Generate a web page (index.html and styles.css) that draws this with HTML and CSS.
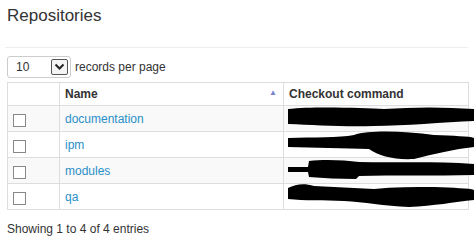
FILE: index.html
```html
<!DOCTYPE html>
<html lang="en">
<head>
    <meta charset="UTF-8">
    <title>Repositories</title>
    <link rel="stylesheet" href="styles.css">
</head>
<body>
    <div class="page">
        <h1>Repositories</h1>
        <hr class="divider">

        <div class="length-control">
            <div class="fake-select">
                <span class="value">10</span>
                <span class="arrow">
                    <svg width="11" height="8" viewBox="0 0 11 8"><path d="M1.5 1.5 L5.5 5.5 L9.5 1.5" fill="none" stroke="#222" stroke-width="2"/></svg>
                </span>
            </div>
            <span>records per page</span>
        </div>

        <table class="repo-table">
            <thead>
                <tr>
                    <th class="col-check"></th>
                    <th class="col-name">Name <span class="sort">&#9650;</span></th>
                    <th class="col-cmd">Checkout command</th>
                </tr>
            </thead>
            <tbody>
                <tr>
                    <td class="col-check"><span class="box"></span></td>
                    <td><a href="#">documentation</a></td>
                    <td class="redacted">
                        <svg width="190" height="25" viewBox="0 0 190 25"><path d="M4 3 C30 0 80 2 100 3 C130 1 160 1 190 3 L190 15 C160 16 120 20 90 20 C60 21 30 19 4 18 Z" fill="#000"/></svg>
                    </td>
                </tr>
                <tr>
                    <td class="col-check"><span class="box"></span></td>
                    <td><a href="#">ipm</a></td>
                    <td class="redacted">
                        <svg width="190" height="25" viewBox="0 0 190 25"><path d="M4 6 C30 5 55 6 70 3 C85 -2 120 -1 150 3 C170 4 185 4 190 6 L190 15 C170 17 150 22 130 27 C110 28 95 24 85 17 C60 16 30 16 4 15 Z" fill="#000"/></svg>
                    </td>
                </tr>
                <tr>
                    <td class="col-check"><span class="box"></span></td>
                    <td><a href="#">modules</a></td>
                    <td class="redacted">
                        <svg width="190" height="25" viewBox="0 0 190 25"><path d="M4 9 L24 9 L25 3 C40 1 60 2 75 4 C110 5 150 3 190 6 L190 17 C150 18 110 17 75 18 L72 21 C55 21 40 20 25 19 L24 14 L4 14 Z" fill="#000"/></svg>
                    </td>
                </tr>
                <tr>
                    <td class="col-check"><span class="box"></span></td>
                    <td><a href="#">qa</a></td>
                    <td class="redacted">
                        <svg width="190" height="25" viewBox="0 0 190 25"><path d="M4 4 C12 0 20 -1 30 2 C50 3 70 4 90 5 C110 3 130 3 150 3 C170 4 185 4 190 6 L190 16 C170 18 150 22 125 23 C100 22 80 18 60 17 C40 16 20 17 4 15 Z" fill="#000"/></svg>
                    </td>
                </tr>
            </tbody>
        </table>

        <div class="info">Showing 1 to 4 of 4 entries</div>
    </div>
</body>
</html>
```

FILE: styles.css
```css
body {
    margin: 0;
    font-family: 'Liberation Sans', Arial, sans-serif;
    font-size: 12px;
    color: #333;
    background-color: #fff;
}

.page {
    padding: 5px 6px 0 7px;
}

h1 {
    margin: 0;
    font-size: 17px;
    font-weight: normal;
    line-height: 22px;
    color: #333;
}

.divider {
    border: none;
    border-top: 1px solid #eee;
    margin: 20px 0 8px -2px;
}

.length-control {
    display: flex;
    align-items: center;
    gap: 4px;
    height: 22px;
}

.fake-select {
    height: 20px;
    width: 52px;
    border: 1px solid #ccc;
    border-radius: 3px;
    display: flex;
    align-items: center;
    justify-content: space-between;
    padding: 0 2px 0 8px;
}

.fake-select .value {
    font-size: 12px;
    color: #333;
}

.fake-select .arrow {
    width: 15px;
    height: 14px;
    border: 1px solid #555;
    border-radius: 2px;
    background-color: #f4f4f4;
    display: flex;
    align-items: center;
    justify-content: center;
}

.repo-table {
    margin-top: 4px;
    width: 461px;
    table-layout: fixed;
    border-collapse: collapse;
    border: 1px solid #ddd;
}

.repo-table th,
.repo-table td {
    border: 1px solid #ddd;
    text-align: left;
    padding: 0 5px;
    height: 25px;
    box-sizing: border-box;
}

.repo-table th {
    font-weight: bold;
    height: 23px;
}

.col-check {
    width: 52px;
}

.col-name {
    width: 224px;
    position: relative;
}

.col-cmd {
    width: 185px;
}

.sort {
    position: absolute;
    right: 6px;
    top: 5px;
    font-size: 8px;
    color: #7b83c8;
}

.repo-table tbody tr:nth-child(odd) {
    background-color: #f9f9f9;
}

.repo-table a {
    color: #2a8fc8;
    text-decoration: none;
}

.box {
    display: block;
    width: 11px;
    height: 11px;
    border: 1px solid #888;
    background-color: #fff;
    margin-top: 3px;
}

.repo-table td.redacted {
    padding: 0;
    vertical-align: top;
}

.redacted svg {
    display: block;
    overflow: visible;
}

.info {
    margin-top: 12px;
}
```
